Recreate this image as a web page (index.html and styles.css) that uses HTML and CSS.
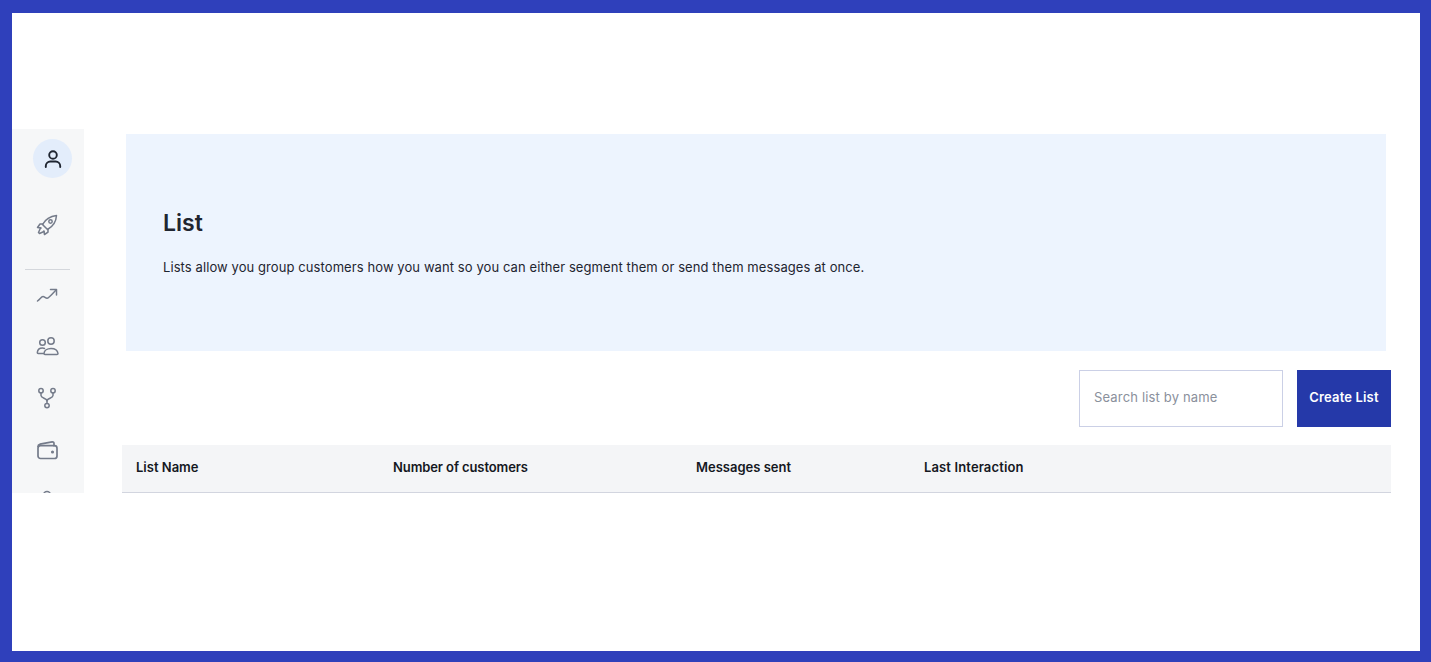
FILE: index.html
```html
<!DOCTYPE html>
<html lang="en">
<head>
<meta charset="utf-8">
<title>List</title>
<link rel="stylesheet" href="styles.css">
</head>
<body>
<div class="frame">
  <div class="layout">
    <aside class="sidebar">
      <div class="avatar">
        <svg class="icon icon-dark" viewBox="0 0 24 24"><circle cx="12" cy="8" r="3.800"/><path d="M4.800 20v-1a4.500 4.500 0 0 1 4.500-4.500h5.400a4.500 4.500 0 0 1 4.500 4.500v1"/></svg>
      </div>
      <div class="nav-item rocket">
        <svg class="icon" viewBox="0 0 24 24"><path d="M7.500 11.500c3-5.500 7.500-8.300 14-9-.4 6.500-3.500 11-9 14l-5-5z"/><path d="M8 11H5l-2.500 3.500 3.500.6"/><path d="M13 16v3.200l-3.500 2.300-.6-3.500"/><path d="M5.500 15l-2 4.500 1 1 4.500-2"/><circle cx="15.500" cy="8.500" r="1.700"/></svg>
      </div>
      <div class="divider"></div>
      <div class="nav-item first">
        <svg class="icon" viewBox="0 0 24 24"><path d="M2.500 18c2.500-2 4-4.500 5.500-4.500s2.500 1.800 4 1.800 3-1.800 9-8.300"/><path d="M15.500 6.500h6v5.500"/></svg>
      </div>
      <div class="nav-item">
        <svg class="icon" viewBox="0 0 24 24"><circle cx="7.500" cy="7.500" r="2.800"/><circle cx="16" cy="6" r="3.200"/><path d="M9.500 13.500c-.7-.3-1.300-.4-2-.4-3 0-5 2-5.200 4.500 0 .6.300.9.800.9h5.400"/><path d="M9 18.500c.2-3 3.200-5 7-5s6.600 2 7 5c0 .6-.4 1-1 1H10c-.6 0-1-.4-1-1z"/></svg>
      </div>
      <div class="nav-item">
        <svg class="icon" viewBox="0 0 24 24"><circle cx="6" cy="4.800" r="2.200"/><circle cx="18" cy="4.800" r="2.200"/><circle cx="12" cy="19.600" r="2.200"/><path d="M6 7v2.500c0 3 6 2.500 6 5.500v2.400"/><path d="M18 7v2.500c0 3-6 2.500-6 5.500"/></svg>
      </div>
      <div class="nav-item">
        <svg class="icon icon-wallet" viewBox="0 0 24 24"><path d="M3 8.500c0-1.200.7-2 1.900-2.300l12.300-2.300c1-.1 1.800.5 1.800 1.600v2.200"/><rect x="3" y="7.700" width="19" height="12.800" rx="2.500"/><circle class="dot" cx="17.500" cy="14" r=".7"/></svg>
      </div>
      <div class="nav-item">
        <svg class="icon" viewBox="0 0 24 24"><circle cx="12" cy="5" r="3.500"/></svg>
      </div>
    </aside>
    <main class="content">
      <section class="banner">
        <h1 class="banner-title">List</h1>
        <p class="banner-text">Lists allow you group customers how you want so you can either segment them or send them messages at once.</p>
      </section>
      <div class="toolbar">
        <input class="search" type="text" placeholder="Search list by name">
        <button class="create" type="button">Create List</button>
      </div>
      <div class="table-head">
        <div>List Name</div>
        <div class="tight">Number of customers</div>
        <div>Messages sent</div>
        <div class="wide">Last Interaction</div>
      </div>
    </main>
  </div>
</div>
</body>
</html>
```
FILE: styles.css
```css
* { box-sizing: border-box; }
html, body { margin: 0; height: 100%; }
body {
  background: #2f40bb;
  padding: 13px 11px 11px 12px;
  font-family: Inter, "Noto Sans", sans-serif;
  color: #1f2530;
  overflow: hidden;
}
.frame { background: #fff; height: 638px; padding-top: 116px; }
.layout { display: flex; align-items: flex-start; }
.sidebar {
  width: 72px;
  height: 363.500px;
  flex: none;
  background: #f6f7f8;
  overflow: hidden;
  display: flex;
  flex-direction: column;
  align-items: center;
  padding-top: 10px;
}
.avatar {
  width: 39px;
  height: 39px;
  flex: none;
  border-radius: 50%;
  background: #e3edfb;
  display: flex;
  align-items: center;
  justify-content: center;
  margin-left: 9px;
}
.nav-item {
  height: 24px;
  flex: none;
  display: flex;
  margin-top: 27.670px;
  margin-right: 3px;
}
.nav-item.rocket { margin-top: 35px; }
.nav-item.first { margin-top: 13px; }
.icon {
  width: 24px;
  height: 24px;
  fill: none;
  stroke: #747b8a;
  stroke-width: 1.5;
  stroke-linecap: round;
  stroke-linejoin: round;
}
.icon-dark { stroke: #1f2530; stroke-width: 1.9; }
.icon-wallet { stroke-width: 1.7; }
.dot { fill: #747b8a; }
.divider { width: 45px; height: 1px; flex: none; background: #d4d7dc; margin-top: 32px; margin-right: 2px; }
.content { width: 1269px; margin-left: 38px; flex: none; }
.banner {
  margin: 5px 5px 0 4px;
  height: 217px;
  background: #edf4fe;
  padding: 75px 37px 0;
}
.banner-title { margin: 0; font-size: 23px; line-height: 28px; font-weight: 600; }
.banner-text { margin: 21px 0 0; font-size: 13px; line-height: 18px; letter-spacing: 0.087px; }
.toolbar { display: flex; justify-content: flex-end; gap: 14px; margin-top: 19px; }
.search {
  width: 204px;
  height: 57px;
  border: 1px solid #cbd0e6;
  background: #fff;
  padding: 0 14px 3px;
  font: 13px Inter, "Noto Sans", sans-serif;
  letter-spacing: 0.16px;
  outline: none;
  border-radius: 0;
}
.search::placeholder { color: #8a909c; opacity: 1; }
.create {
  width: 94px;
  height: 57px;
  border: 0;
  border-radius: 0;
  background: #2539a9;
  color: #fff;
  font: 600 13px Inter, "Noto Sans", sans-serif;
  letter-spacing: 0.15px;
  padding: 0 0 3px;
}
.table-head {
  margin-top: 18px;
  height: 48px;
  background: #f4f5f7;
  border-bottom: 1px solid #d2d5df;
  display: grid;
  grid-template-columns: 257px 303px 228px 1fr;
  align-items: center;
  padding: 0 0 4px 14px;
  font-size: 13px;
  font-weight: 600;
  color: #15181f;
}
.tight { letter-spacing: -0.1px; }
.wide { letter-spacing: 0.13px; }
```
